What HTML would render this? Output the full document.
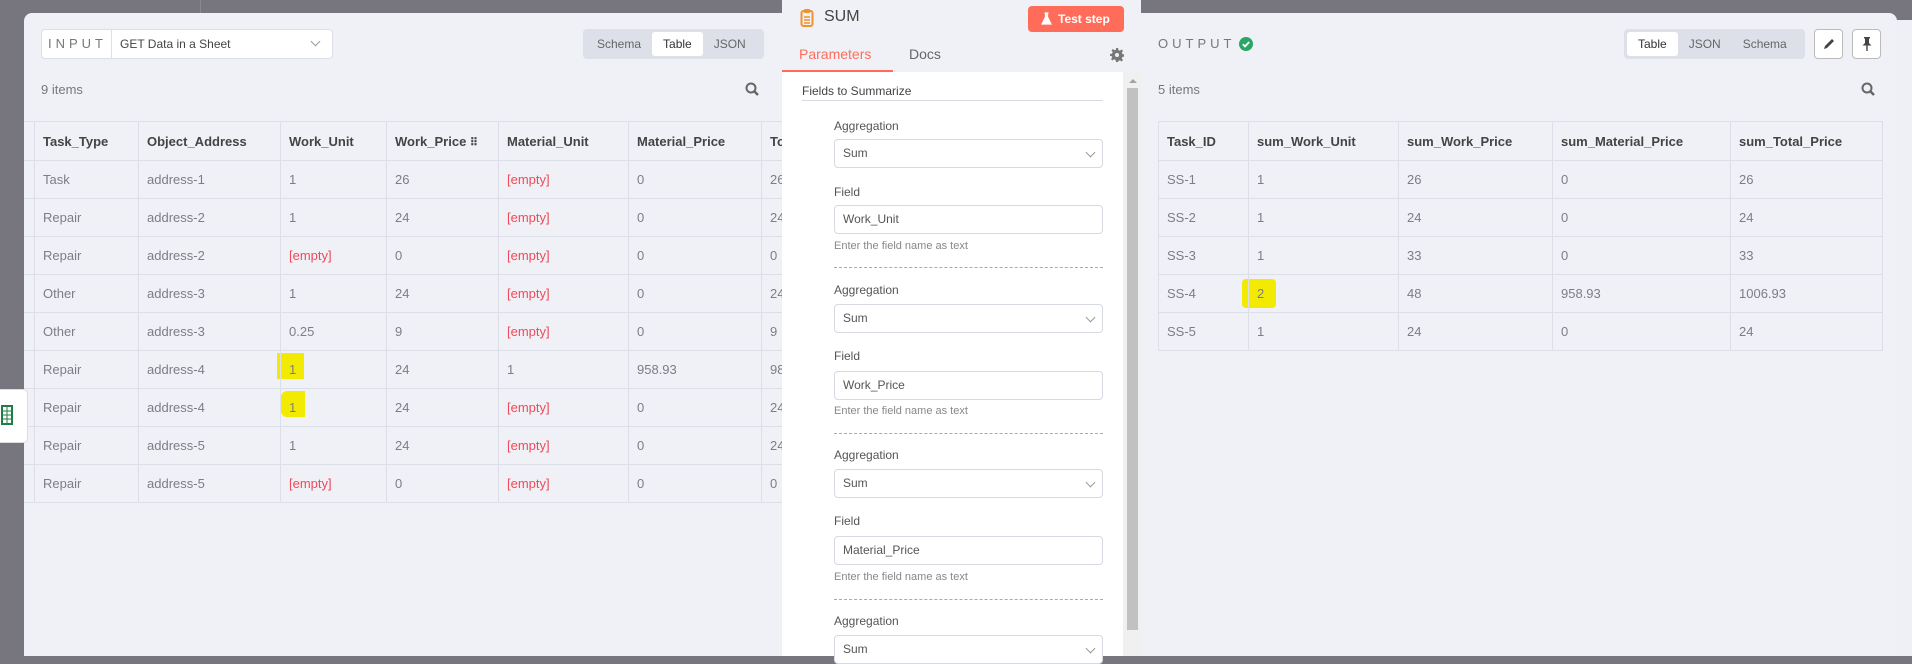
<!DOCTYPE html>
<html><head><meta charset="utf-8"><style>
*{box-sizing:border-box;margin:0;padding:0}
body{width:1912px;height:656px;overflow:hidden;background:#77767f;font-family:"Liberation Sans",sans-serif;position:relative;color:#555}
.abs{position:absolute}
.panel{position:absolute;background:#f0f1f6}
table{border-collapse:collapse;position:absolute;table-layout:fixed}
td,th{border:1px solid #dcdfe8;height:38px;padding:0 8px;font-size:13px;color:#7d7d87;text-align:left;white-space:nowrap;overflow:hidden;font-weight:normal}
th{font-weight:bold;color:#444;height:39px}
.e{color:#ee4a5a}
.seg{position:absolute;background:#dde0e8;border-radius:4px;height:30px;display:flex;align-items:center;padding:0 3px;font-size:12px;color:#666}
.seg span{padding:0 11px;height:24px;line-height:24px;border-radius:3px}
.seg .on{background:#fff;color:#333}
.lbl{position:absolute;font-size:12px;color:#555}
.inp{position:absolute;left:834px;width:269px;height:29px;border:1px solid #d6d9e2;border-radius:4px;background:#fff;font-size:12px;color:#555;padding:0 8px;line-height:27px}
.help{position:absolute;left:834px;font-size:11px;color:#888}
.dash{position:absolute;left:834px;width:269px;border-top:1px dashed #aaa}
.chev{position:absolute;right:8px;top:9px;width:7px;height:7px;border-right:1px solid #999;border-bottom:1px solid #999;transform:rotate(45deg)}
.hl{position:absolute;background:#f2ea00}
</style></head><body>
<div class="abs" style="left:200px;top:0;width:1px;height:13px;background:#8a8992"></div>
<div class="abs" style="left:1890px;top:20px;width:22px;height:636px;background:#eef0f5"></div>
<!-- left panel -->
<div class="panel" style="left:24px;top:13px;width:758px;height:643px;border-radius:8px 0 0 0"></div>
<div class="abs" style="left:41px;top:29px;width:292px;height:30px;background:#fff;border:1px solid #dcdfe8;border-radius:4px"></div>
<div class="abs" style="left:111px;top:29px;width:1px;height:30px;background:#dcdfe8"></div>
<div class="abs" style="left:48px;top:36px;font-size:13px;letter-spacing:4px;color:#777">INPUT</div>
<div class="abs" style="left:120px;top:37px;font-size:12px;color:#444">GET Data in a Sheet</div>
<div class="abs" style="left:312px;top:38px;width:7px;height:7px;border-right:1px solid #999;border-bottom:1px solid #999;transform:rotate(45deg)"></div>
<div class="seg" style="left:583px;top:29px;width:181px"><span>Schema</span><span class="on">Table</span><span>JSON</span></div>
<div class="abs" style="left:41px;top:82px;font-size:13px;color:#777">9 items</div>
<svg class="abs" style="left:745px;top:82px" width="14" height="14"><circle cx="6" cy="6" r="4.5" fill="none" stroke="#666" stroke-width="2"/><line x1="9" y1="9" x2="13" y2="13" stroke="#666" stroke-width="2.5"/></svg>
<div class="abs" style="left:24px;top:121px;width:758px;height:1px;background:#dcdfe8"></div>
<div class="hl" style="left:277px;top:353px;width:27px;height:26px"></div>
<div class="hl" style="left:281px;top:391px;width:24px;height:26px;border-radius:6px 0 0 6px"></div>
<div class="abs" style="left:24px;top:121px;width:758px;height:420px;overflow:hidden">
<table style="left:-4px;top:0;width:800px">
<colgroup><col style="width:14px"><col style="width:104px"><col style="width:142px"><col style="width:106px"><col style="width:112px"><col style="width:130px"><col style="width:133px"><col style="width:59px"></colgroup>
<tr><th></th><th>Task_Type</th><th>Object_Address</th><th>Work_Unit</th><th>Work_Price <span style="font-size:11px">⠿</span></th><th>Material_Unit</th><th>Material_Price</th><th>Total</th></tr>
<tr><td></td><td>Task</td><td>address-1</td><td>1</td><td>26</td><td class="e">[empty]</td><td>0</td><td>26</td></tr>
<tr><td></td><td>Repair</td><td>address-2</td><td>1</td><td>24</td><td class="e">[empty]</td><td>0</td><td>24</td></tr>
<tr><td></td><td>Repair</td><td>address-2</td><td class="e">[empty]</td><td>0</td><td class="e">[empty]</td><td>0</td><td>0</td></tr>
<tr><td></td><td>Other</td><td>address-3</td><td>1</td><td>24</td><td class="e">[empty]</td><td>0</td><td>24</td></tr>
<tr><td></td><td>Other</td><td>address-3</td><td>0.25</td><td>9</td><td class="e">[empty]</td><td>0</td><td>9</td></tr>
<tr><td></td><td>Repair</td><td>address-4</td><td>1</td><td>24</td><td>1</td><td>958.93</td><td>98</td></tr>
<tr><td></td><td>Repair</td><td>address-4</td><td>1</td><td>24</td><td class="e">[empty]</td><td>0</td><td>24</td></tr>
<tr><td></td><td>Repair</td><td>address-5</td><td>1</td><td>24</td><td class="e">[empty]</td><td>0</td><td>24</td></tr>
<tr><td></td><td>Repair</td><td>address-5</td><td class="e">[empty]</td><td>0</td><td class="e">[empty]</td><td>0</td><td>0</td></tr>
</table></div>
<div class="abs" style="left:0;top:389px;width:28px;height:54px;background:#fff;border-radius:0 5px 5px 0;border:1px solid #ddd;border-left:none"></div>
<svg class="abs" style="left:1px;top:405px" width="12" height="20"><rect x="1" y="1" width="10" height="18" fill="none" stroke="#1e7e45" stroke-width="2"/><line x1="1" y1="6" x2="11" y2="6" stroke="#1e7e45"/><line x1="1" y1="10" x2="11" y2="10" stroke="#1e7e45"/><line x1="1" y1="14" x2="11" y2="14" stroke="#1e7e45"/><line x1="6" y1="1" x2="6" y2="19" stroke="#1e7e45"/></svg>
<!-- middle panel -->
<div class="panel" style="left:782px;top:0;width:359px;height:656px;background:#f0f1f6"></div>
<svg class="abs" style="left:800px;top:8px" width="14" height="20"><rect x="1.5" y="3" width="11" height="15" rx="2" fill="none" stroke="#f0922e" stroke-width="2"/><rect x="4" y="1" width="6" height="4" rx="1" fill="#f0922e"/><line x1="4" y1="9" x2="10" y2="9" stroke="#f0922e" stroke-width="1.5"/><line x1="4" y1="12" x2="10" y2="12" stroke="#f0922e" stroke-width="1.5"/><line x1="4" y1="15" x2="10" y2="15" stroke="#f0922e" stroke-width="1.5"/></svg>
<div class="abs" style="left:824px;top:8px;font-size:16px;color:#444">SUM</div>
<div class="abs" style="left:1028px;top:6px;width:96px;height:26px;background:#ff6d5a;border-radius:4px;color:#fff;font-size:12px;font-weight:bold;line-height:26px;padding-left:30px">Test step</div>
<svg class="abs" style="left:1041px;top:12px" width="11" height="13"><path d="M3.5 1h4M4.5 1v4L1 12h9L6.5 5V1" fill="#fff" stroke="#fff" stroke-width="1.2"/></svg>
<div class="abs" style="left:799px;top:46px;font-size:14px;color:#ff6d5a">Parameters</div>
<div class="abs" style="left:909px;top:46px;font-size:14px;color:#666">Docs</div>
<div class="abs" style="left:782px;top:70px;width:111px;height:2px;background:#ff6d5a"></div>
<svg class="abs" style="left:1110px;top:48px" width="14" height="14" viewBox="0 0 14 14"><path d="M6 0h2l.4 2 1.5.7 1.7-1.2 1.4 1.4-1.2 1.7.7 1.5 2 .4v2l-2 .4-.7 1.5 1.2 1.7-1.4 1.4-1.7-1.2-1.5.7L8 14H6l-.4-2-1.5-.7-1.7 1.2-1.4-1.4 1.2-1.7L1.5 8 0 8V6l2-.4.7-1.5L1.5 2.4 2.9 1 4.6 2.2 6 1.6z" fill="#777"/><circle cx="7" cy="7" r="2" fill="#f0f1f6"/></svg>
<div class="abs" style="left:782px;top:72px;width:341px;height:584px;background:#fff"></div>
<div class="abs" style="left:1123px;top:72px;width:18px;height:584px;background:#f0f0f0"></div>
<div class="abs" style="left:1127px;top:88px;width:11px;height:542px;background:#c1c1c1"></div>
<div class="abs" style="left:1129px;top:79px;width:0;height:0;border-left:4px solid transparent;border-right:4px solid transparent;border-bottom:4px solid #a3a3a3"></div>
<div class="abs" style="left:802px;top:84px;font-size:12px;color:#444">Fields to Summarize</div>
<div class="abs" style="left:802px;top:100px;width:301px;height:1px;background:#d6d9e2"></div>

<div class="lbl" style="left:834px;top:119px">Aggregation</div>
<div class="inp" style="top:139px">Sum<i class="chev"></i></div>
<div class="lbl" style="left:834px;top:185px">Field</div>
<div class="inp" style="top:205px">Work_Unit</div>
<div class="help" style="top:240px">Enter the field name as text</div>
<div class="dash" style="top:267px"></div>

<div class="lbl" style="left:834px;top:283px">Aggregation</div>
<div class="inp" style="top:304px">Sum<i class="chev"></i></div>
<div class="lbl" style="left:834px;top:349px">Field</div>
<div class="inp" style="top:371px">Work_Price</div>
<div class="help" style="top:405px">Enter the field name as text</div>
<div class="dash" style="top:433px"></div>

<div class="lbl" style="left:834px;top:448px">Aggregation</div>
<div class="inp" style="top:469px">Sum<i class="chev"></i></div>
<div class="lbl" style="left:834px;top:514px">Field</div>
<div class="inp" style="top:536px">Material_Price</div>
<div class="help" style="top:571px">Enter the field name as text</div>
<div class="dash" style="top:599px"></div>

<div class="lbl" style="left:834px;top:614px">Aggregation</div>
<div class="inp" style="top:635px">Sum<i class="chev"></i></div>
<!-- right panel -->
<div class="panel" style="left:1141px;top:13px;width:756px;height:643px;border-radius:0 8px 0 0"></div>
<div class="abs" style="left:1158px;top:36px;font-size:13px;letter-spacing:4px;color:#777">OUTPUT</div>
<svg class="abs" style="left:1239px;top:37px" width="14" height="14"><circle cx="7" cy="7" r="7" fill="#29a566"/><path d="M3.8 7.2l2.2 2.2 4.2-4.4" stroke="#fff" stroke-width="1.8" fill="none"/></svg>
<div class="seg" style="left:1624px;top:29px;width:181px"><span class="on">Table</span><span>JSON</span><span>Schema</span></div>
<div class="abs" style="left:1814px;top:29px;width:29px;height:30px;border:1px solid #bbb;border-radius:4px;background:#fff"></div>
<svg class="abs" style="left:1822px;top:37px" width="14" height="14"><path d="M2 12l1-3 7-7 2 2-7 7z" fill="#444"/></svg>
<div class="abs" style="left:1852px;top:29px;width:29px;height:30px;border:1px solid #bbb;border-radius:4px;background:#fff"></div>
<svg class="abs" style="left:1860px;top:36px" width="14" height="16"><path d="M4 1h6v1.5H9v4.5l2.5 2.5H2.5L5 7V2.5H4z M6.3 9h1.4v6H6.3z" fill="#444"/></svg>
<div class="abs" style="left:1158px;top:82px;font-size:13px;color:#777">5 items</div>
<svg class="abs" style="left:1861px;top:82px" width="14" height="14"><circle cx="6" cy="6" r="4.5" fill="none" stroke="#666" stroke-width="2"/><line x1="9" y1="9" x2="13" y2="13" stroke="#666" stroke-width="2.5"/></svg>
<div class="hl" style="left:1242px;top:279px;width:34px;height:29px;border-radius:4px"></div>
<table style="left:1158px;top:121px;width:724px">
<colgroup><col style="width:90px"><col style="width:150px"><col style="width:154px"><col style="width:178px"><col style="width:152px"></colgroup>
<tr><th>Task_ID</th><th>sum_Work_Unit</th><th>sum_Work_Price</th><th>sum_Material_Price</th><th>sum_Total_Price</th></tr>
<tr><td>SS-1</td><td>1</td><td>26</td><td>0</td><td>26</td></tr>
<tr><td>SS-2</td><td>1</td><td>24</td><td>0</td><td>24</td></tr>
<tr><td>SS-3</td><td>1</td><td>33</td><td>0</td><td>33</td></tr>
<tr><td>SS-4</td><td>2</td><td>48</td><td>958.93</td><td>1006.93</td></tr>
<tr><td>SS-5</td><td>1</td><td>24</td><td>0</td><td>24</td></tr>
</table>
</body></html>
